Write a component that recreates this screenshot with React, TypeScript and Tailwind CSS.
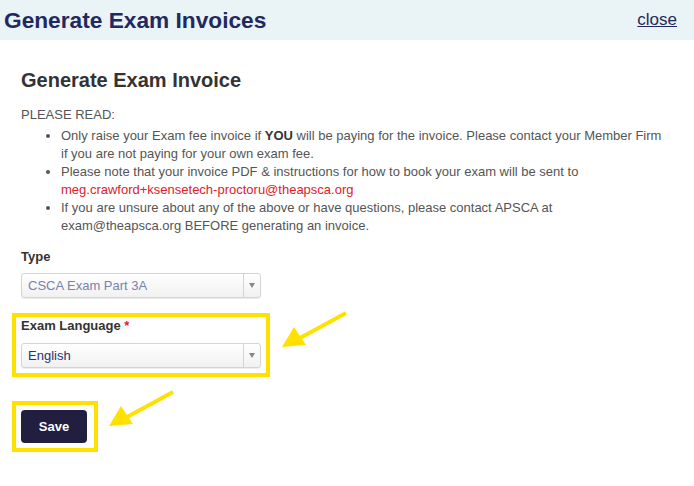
import React from "react";

function Select({ value, disabled }: { value: string; disabled?: boolean }) {
  return (
    <div className="flex h-[25px] w-[240px] items-stretch rounded-[3px] border border-[#d4d4d4] bg-gradient-to-b from-white to-[#f1f1f1] shadow-[0_1px_1px_rgba(0,0,0,0.08)]">
      <div className={`flex flex-1 items-center pl-[6px] text-[13px] ${disabled ? "text-[#7883aa]" : "text-[#283570]"}`}>{value}</div>
      <div className="flex w-[17px] items-center justify-center border-l border-[#d4d4d4]">
        <div className="h-0 w-0 border-x-[3px] border-t-[5px] border-x-transparent border-t-[#888]" />
      </div>
    </div>
  );
}

function Arrow({ className }: { className: string }) {
  return (
    <svg className={className} width="70" height="40" viewBox="0 0 70 40">
      <line x1="66" y1="3" x2="20" y2="28" stroke="#ffe100" strokeWidth="4" />
      <polygon points="2,37 14,17 26,35" fill="#ffe100" />
    </svg>
  );
}

export default function App() {
  return (
    <div className="relative h-[486px] w-[694px] bg-white font-['Liberation_Sans',Arial,sans-serif]">
      <div className="flex h-[40px] items-center justify-between bg-[#eaf3f5] pl-[4px] pr-[17px]">
        <h1 className="text-[22.7px] font-bold text-[#22295e]">Generate Exam Invoices</h1>
        <a className="text-[17px] text-[#22295e] underline">close</a>
      </div>
      <div className="pl-[21px] pr-[28px]">
        <h2 className="mt-[28px] text-[20px] font-bold leading-[24px] text-[#333]">Generate Exam Invoice</h2>
        <p className="mt-[14px] text-[13px] leading-[18px] text-[#555]">PLEASE READ:</p>
        <ul className="mt-[3px] list-disc pl-[40px] text-[13px] leading-[18px] text-[#555] marker:text-[#555]">
          <li>
            Only raise your Exam fee invoice if <b className="text-[#333]">YOU</b> will be paying for the invoice. Please contact your Member Firm if you are not paying for your own exam fee.
          </li>
          <li>
            Please note that your invoice PDF &amp; instructions for how to book your exam will be sent to <span className="text-[#e0202a]">meg.crawford+ksensetech-proctoru@theapsca.org</span>
          </li>
          <li>If you are unsure about any of the above or have questions, please contact APSCA at exam@theapsca.org BEFORE generating an invoice.</li>
        </ul>
        <div className="mt-[13px] text-[13px] font-bold leading-[18px] text-[#333]">Type</div>
        <div className="mt-[7px]">
          <Select value="CSCA Exam Part 3A" disabled />
        </div>
        <div className="-ml-[9px] mt-[15px] w-[258px] border-[4px] border-[#ffe100] px-[5px] pb-[5px] pt-0">
          <div className="text-[13px] font-bold leading-[18px] text-[#333]">
            Exam Language <span className="text-[#e0202a]">*</span>
          </div>
          <div className="mt-[8px]">
            <Select value="English" />
          </div>
        </div>
        <div className="-ml-[9px] mt-[24px] w-[86px] border-[4px] border-[#ffe100] p-[5px]">
          <button className="h-[33px] w-[66px] rounded-[4px] bg-[#221e40] text-[13px] font-bold text-white">Save</button>
        </div>
      </div>
      <Arrow className="absolute left-[280px] top-[310px]" />
      <Arrow className="absolute left-[107px] top-[389px]" />
    </div>
  );
}
